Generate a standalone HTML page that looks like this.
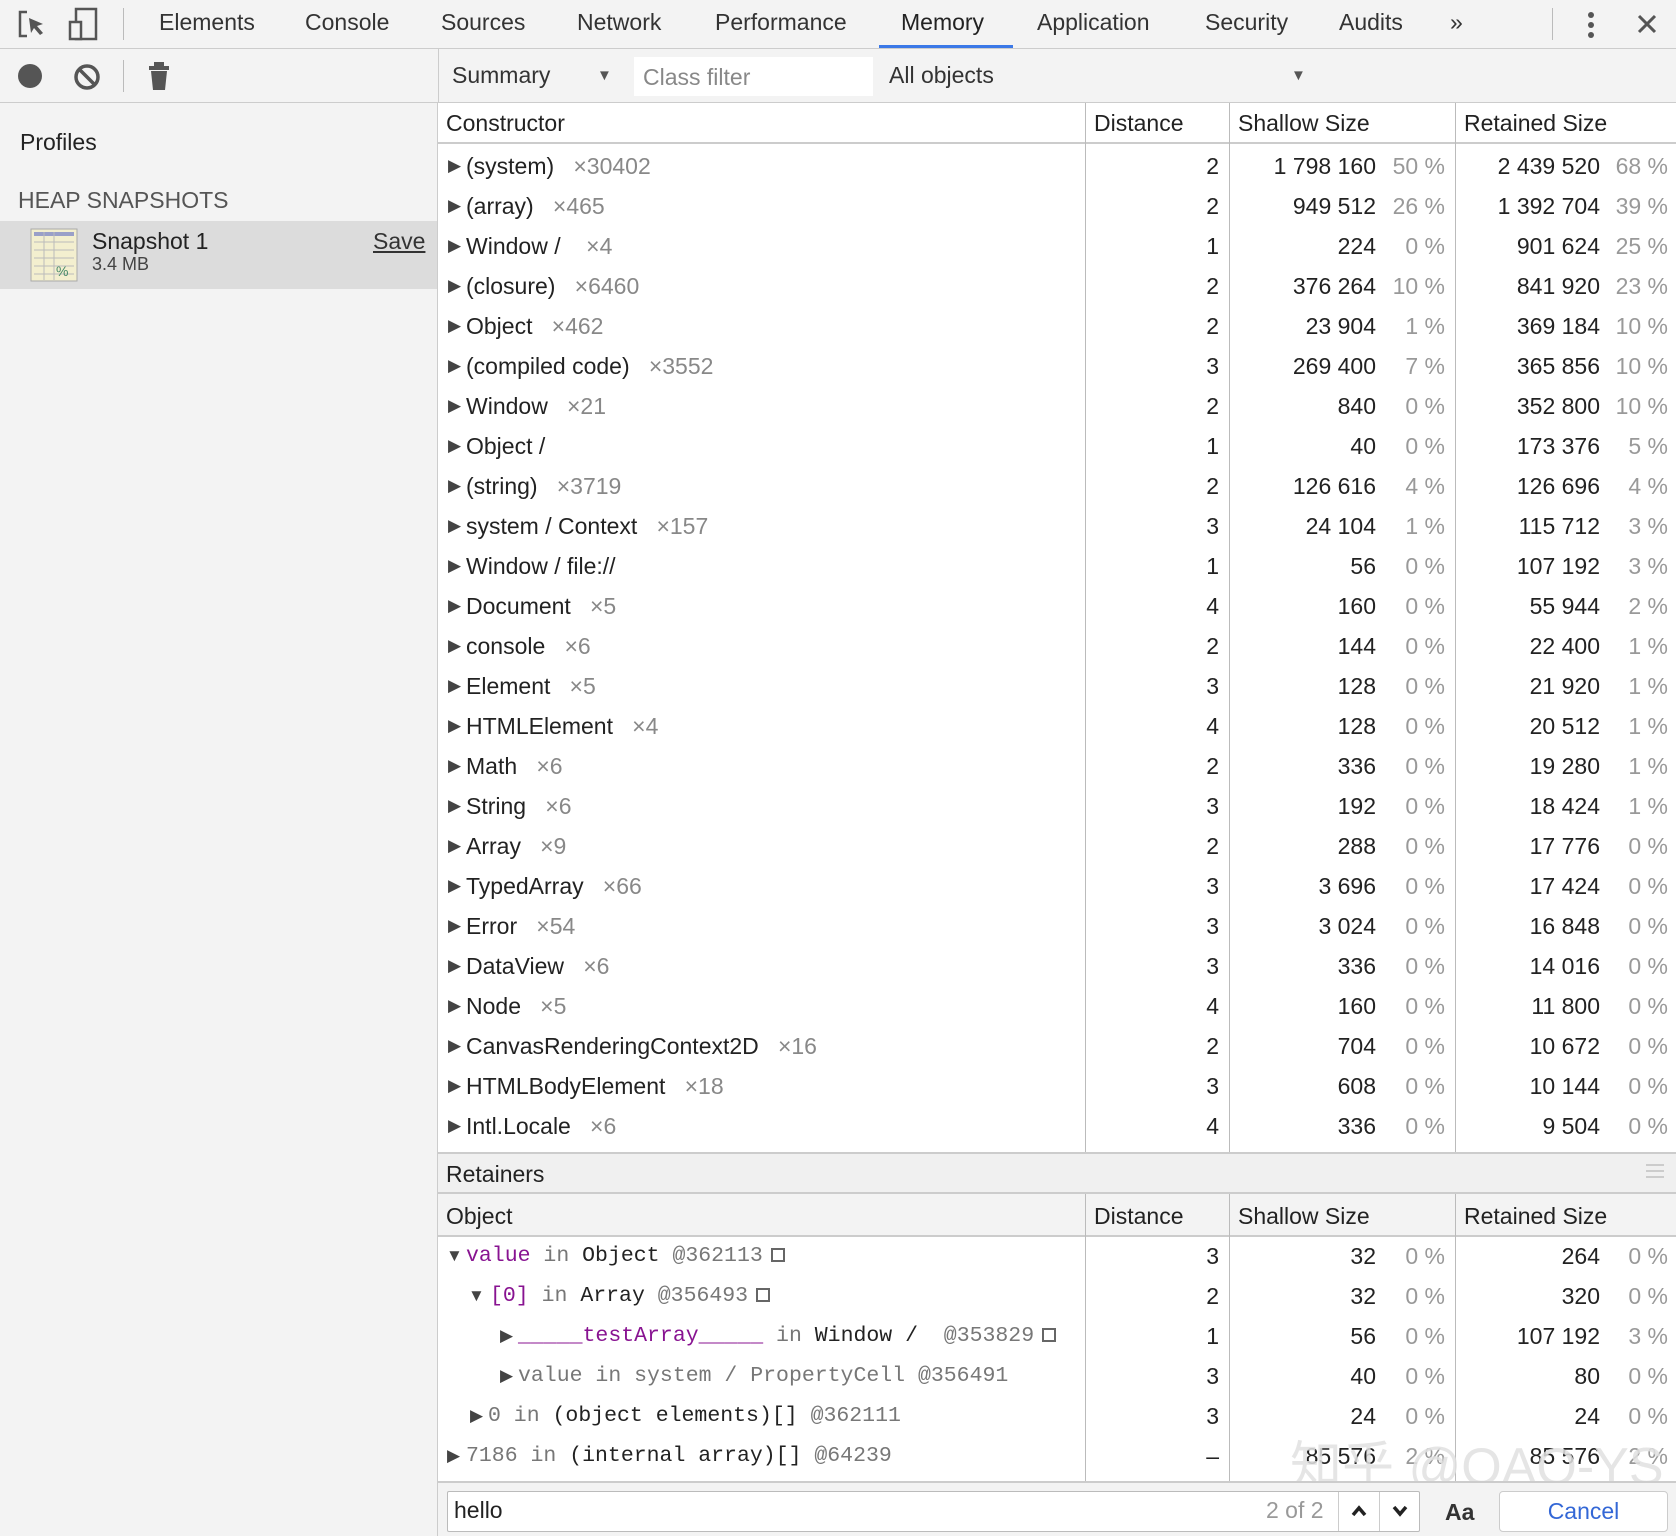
<!DOCTYPE html>
<html><head><meta charset="utf-8"><style>
*{margin:0;padding:0;box-sizing:border-box}
body{width:1676px;height:1536px;position:relative;overflow:hidden;background:#fff;font-family:"Liberation Sans",sans-serif;color:#222;font-size:23px}
.a{position:absolute;white-space:nowrap}
.top{left:0;top:0;width:1676px;height:49px;background:#f3f3f3;border-bottom:1px solid #ccc}
.tab{top:9px;font-size:23px;color:#333}
.tb2{left:0;top:49px;width:1676px;height:54px;background:#f3f3f3;border-bottom:1px solid #ccc}
.side{left:0;top:103px;width:438px;height:1433px;background:#f3f3f3;border-right:1px solid #ccc}
.hdr{left:438px;top:103px;width:1238px;height:41px;background:#fff;border-bottom:2px solid #ccc}
.vl{width:1px;background:#bbb}
.row{left:0;width:1676px;height:40px;line-height:40px}
.row .n{position:absolute;left:466px}
.row .t{position:absolute;left:448px;font-size:17px;color:#444}
.c{color:#888}
.d{position:absolute;right:457px}
.sn{position:absolute;right:300px}
.sp{position:absolute;right:231px;color:#999}
.rn{position:absolute;right:76px}
.rp{position:absolute;right:8px;color:#999}
.m{font-family:"Liberation Mono",monospace;font-size:21.5px}
.p{color:#881391}
.g{color:#777}
.box{display:inline-block;width:14px;height:14px;border:2px solid #666;vertical-align:middle;margin-left:8px}
</style></head><body>
<div class="a top"></div>
<svg class="a" style="left:17px;top:9px" width="30" height="32" viewBox="0 0 30 32"><path d="M10 3H3v24h7M3 3" fill="none" stroke="#555" stroke-width="2.5"/><path d="M12 9l14 6-6 2 6 7-3 2-6-7-3 5z" fill="#555"/></svg>
<svg class="a" style="left:68px;top:7px" width="32" height="36"><rect x="8" y="2" width="20" height="30" fill="none" stroke="#555" stroke-width="2.5"/><rect x="2" y="15" width="11" height="17" fill="#f3f3f3" stroke="#555" stroke-width="2.5"/></svg>
<div class="a vl" style="left:123px;top:8px;height:32px"></div>
<div class="a tab" style="left:159px">Elements</div>
<div class="a tab" style="left:305px">Console</div>
<div class="a tab" style="left:441px">Sources</div>
<div class="a tab" style="left:577px">Network</div>
<div class="a tab" style="left:715px">Performance</div>
<div class="a tab" style="left:901px;color:#222">Memory</div>
<div class="a" style="left:879px;top:45px;width:134px;height:3px;background:#3b78e7"></div>
<div class="a tab" style="left:1037px">Application</div>
<div class="a tab" style="left:1205px">Security</div>
<div class="a tab" style="left:1339px">Audits</div>
<div class="a tab" style="left:1450px">»</div>
<div class="a vl" style="left:1552px;top:8px;height:32px"></div>
<svg class="a" style="left:1584px;top:10px" width="14" height="30"><circle cx="7" cy="5" r="3" fill="#555"/><circle cx="7" cy="15" r="3" fill="#555"/><circle cx="7" cy="25" r="3" fill="#555"/></svg>
<svg class="a" style="left:1636px;top:13px" width="22" height="22"><path d="M3 3L19 19M19 3L3 19" stroke="#555" stroke-width="3"/></svg>

<div class="a tb2"></div>
<div class="a" style="left:18px;top:64px;width:24px;height:24px;border-radius:50%;background:#555"></div>
<svg class="a" style="left:73px;top:63px" width="28" height="28"><circle cx="14" cy="14" r="11" fill="none" stroke="#555" stroke-width="3.5"/><path d="M6 6L22 22" stroke="#555" stroke-width="3.5"/></svg>
<div class="a vl" style="left:123px;top:60px;height:32px"></div>
<svg class="a" style="left:148px;top:61px" width="22" height="30"><rect x="6" y="1" width="10" height="4" fill="#555"/><rect x="1" y="5" width="20" height="4" fill="#555"/><path d="M3 10h16l-2 19H5z" fill="#555"/></svg>
<div class="a" style="left:438px;top:49px;width:1px;height:54px;background:#ccc"></div>
<div class="a" style="left:452px;top:62px;color:#333">Summary</div>
<div class="a" style="left:597px;top:67px;font-size:15px;color:#555">▼</div>
<div class="a" style="left:634px;top:57px;width:239px;height:39px;background:#fff"></div>
<div class="a" style="left:643px;top:64px;color:#888">Class filter</div>
<div class="a" style="left:889px;top:62px;color:#333">All objects</div>
<div class="a" style="left:1291px;top:67px;font-size:15px;color:#555">▼</div>

<div class="a side"></div>
<div class="a" style="left:20px;top:129px">Profiles</div>
<div class="a" style="left:18px;top:187px;color:#555">HEAP SNAPSHOTS</div>
<div class="a" style="left:0;top:221px;width:437px;height:68px;background:#dcdcdc"></div>
<svg class="a" style="left:30px;top:228px" width="48" height="55"><rect x="1" y="1" width="46" height="52" fill="#f3efcf" stroke="#aaa"/><rect x="4" y="4" width="40" height="4" fill="#9aa0c8"/><g stroke="#bbb"><path d="M4 14h40M4 22h40M4 30h40M4 38h40M4 46h40M14 4v48M24 4v48"/></g><text x="26" y="48" font-size="14" fill="#486" font-family="Liberation Sans">%</text></svg>
<div class="a" style="left:92px;top:228px">Snapshot 1</div>
<div class="a" style="left:92px;top:254px;font-size:18px;color:#444">3.4 MB</div>
<div class="a" style="left:373px;top:228px;text-decoration:underline;color:#333">Save</div>

<div class="a hdr"></div>
<div class="a" style="left:446px;top:110px">Constructor</div>
<div class="a" style="left:1094px;top:110px">Distance</div>
<div class="a" style="left:1238px;top:110px">Shallow Size</div>
<div class="a" style="left:1464px;top:110px">Retained Size</div>
<div class="a vl" style="left:1085px;top:103px;height:1049px"></div>
<div class="a vl" style="left:1229px;top:103px;height:1049px"></div>
<div class="a vl" style="left:1455px;top:103px;height:1049px"></div>

<div class="a row" style="top:146px"><span class="t">▶</span><span class="n">(system) &nbsp;&nbsp;<span class="c">×30402</span></span><span class="d">2</span><span class="sn">1 798 160</span><span class="sp">50 %</span><span class="rn">2 439 520</span><span class="rp">68 %</span></div>
<div class="a row" style="top:186px"><span class="t">▶</span><span class="n">(array) &nbsp;&nbsp;<span class="c">×465</span></span><span class="d">2</span><span class="sn">949 512</span><span class="sp">26 %</span><span class="rn">1 392 704</span><span class="rp">39 %</span></div>
<div class="a row" style="top:226px"><span class="t">▶</span><span class="n">Window / &nbsp;&nbsp;&nbsp;<span class="c">×4</span></span><span class="d">1</span><span class="sn">224</span><span class="sp">0 %</span><span class="rn">901 624</span><span class="rp">25 %</span></div>
<div class="a row" style="top:266px"><span class="t">▶</span><span class="n">(closure) &nbsp;&nbsp;<span class="c">×6460</span></span><span class="d">2</span><span class="sn">376 264</span><span class="sp">10 %</span><span class="rn">841 920</span><span class="rp">23 %</span></div>
<div class="a row" style="top:306px"><span class="t">▶</span><span class="n">Object &nbsp;&nbsp;<span class="c">×462</span></span><span class="d">2</span><span class="sn">23 904</span><span class="sp">1 %</span><span class="rn">369 184</span><span class="rp">10 %</span></div>
<div class="a row" style="top:346px"><span class="t">▶</span><span class="n">(compiled code) &nbsp;&nbsp;<span class="c">×3552</span></span><span class="d">3</span><span class="sn">269 400</span><span class="sp">7 %</span><span class="rn">365 856</span><span class="rp">10 %</span></div>
<div class="a row" style="top:386px"><span class="t">▶</span><span class="n">Window &nbsp;&nbsp;<span class="c">×21</span></span><span class="d">2</span><span class="sn">840</span><span class="sp">0 %</span><span class="rn">352 800</span><span class="rp">10 %</span></div>
<div class="a row" style="top:426px"><span class="t">▶</span><span class="n">Object /</span><span class="d">1</span><span class="sn">40</span><span class="sp">0 %</span><span class="rn">173 376</span><span class="rp">5 %</span></div>
<div class="a row" style="top:466px"><span class="t">▶</span><span class="n">(string) &nbsp;&nbsp;<span class="c">×3719</span></span><span class="d">2</span><span class="sn">126 616</span><span class="sp">4 %</span><span class="rn">126 696</span><span class="rp">4 %</span></div>
<div class="a row" style="top:506px"><span class="t">▶</span><span class="n">system / Context &nbsp;&nbsp;<span class="c">×157</span></span><span class="d">3</span><span class="sn">24 104</span><span class="sp">1 %</span><span class="rn">115 712</span><span class="rp">3 %</span></div>
<div class="a row" style="top:546px"><span class="t">▶</span><span class="n">Window / file://</span><span class="d">1</span><span class="sn">56</span><span class="sp">0 %</span><span class="rn">107 192</span><span class="rp">3 %</span></div>
<div class="a row" style="top:586px"><span class="t">▶</span><span class="n">Document &nbsp;&nbsp;<span class="c">×5</span></span><span class="d">4</span><span class="sn">160</span><span class="sp">0 %</span><span class="rn">55 944</span><span class="rp">2 %</span></div>
<div class="a row" style="top:626px"><span class="t">▶</span><span class="n">console &nbsp;&nbsp;<span class="c">×6</span></span><span class="d">2</span><span class="sn">144</span><span class="sp">0 %</span><span class="rn">22 400</span><span class="rp">1 %</span></div>
<div class="a row" style="top:666px"><span class="t">▶</span><span class="n">Element &nbsp;&nbsp;<span class="c">×5</span></span><span class="d">3</span><span class="sn">128</span><span class="sp">0 %</span><span class="rn">21 920</span><span class="rp">1 %</span></div>
<div class="a row" style="top:706px"><span class="t">▶</span><span class="n">HTMLElement &nbsp;&nbsp;<span class="c">×4</span></span><span class="d">4</span><span class="sn">128</span><span class="sp">0 %</span><span class="rn">20 512</span><span class="rp">1 %</span></div>
<div class="a row" style="top:746px"><span class="t">▶</span><span class="n">Math &nbsp;&nbsp;<span class="c">×6</span></span><span class="d">2</span><span class="sn">336</span><span class="sp">0 %</span><span class="rn">19 280</span><span class="rp">1 %</span></div>
<div class="a row" style="top:786px"><span class="t">▶</span><span class="n">String &nbsp;&nbsp;<span class="c">×6</span></span><span class="d">3</span><span class="sn">192</span><span class="sp">0 %</span><span class="rn">18 424</span><span class="rp">1 %</span></div>
<div class="a row" style="top:826px"><span class="t">▶</span><span class="n">Array &nbsp;&nbsp;<span class="c">×9</span></span><span class="d">2</span><span class="sn">288</span><span class="sp">0 %</span><span class="rn">17 776</span><span class="rp">0 %</span></div>
<div class="a row" style="top:866px"><span class="t">▶</span><span class="n">TypedArray &nbsp;&nbsp;<span class="c">×66</span></span><span class="d">3</span><span class="sn">3 696</span><span class="sp">0 %</span><span class="rn">17 424</span><span class="rp">0 %</span></div>
<div class="a row" style="top:906px"><span class="t">▶</span><span class="n">Error &nbsp;&nbsp;<span class="c">×54</span></span><span class="d">3</span><span class="sn">3 024</span><span class="sp">0 %</span><span class="rn">16 848</span><span class="rp">0 %</span></div>
<div class="a row" style="top:946px"><span class="t">▶</span><span class="n">DataView &nbsp;&nbsp;<span class="c">×6</span></span><span class="d">3</span><span class="sn">336</span><span class="sp">0 %</span><span class="rn">14 016</span><span class="rp">0 %</span></div>
<div class="a row" style="top:986px"><span class="t">▶</span><span class="n">Node &nbsp;&nbsp;<span class="c">×5</span></span><span class="d">4</span><span class="sn">160</span><span class="sp">0 %</span><span class="rn">11 800</span><span class="rp">0 %</span></div>
<div class="a row" style="top:1026px"><span class="t">▶</span><span class="n">CanvasRenderingContext2D &nbsp;&nbsp;<span class="c">×16</span></span><span class="d">2</span><span class="sn">704</span><span class="sp">0 %</span><span class="rn">10 672</span><span class="rp">0 %</span></div>
<div class="a row" style="top:1066px"><span class="t">▶</span><span class="n">HTMLBodyElement &nbsp;&nbsp;<span class="c">×18</span></span><span class="d">3</span><span class="sn">608</span><span class="sp">0 %</span><span class="rn">10 144</span><span class="rp">0 %</span></div>
<div class="a row" style="top:1106px"><span class="t">▶</span><span class="n">Intl.Locale &nbsp;&nbsp;<span class="c">×6</span></span><span class="d">4</span><span class="sn">336</span><span class="sp">0 %</span><span class="rn">9 504</span><span class="rp">0 %</span></div>

<div class="a" style="left:438px;top:1152px;width:1238px;height:42px;background:#f0f0f0;border-top:2px solid #ccc;border-bottom:2px solid #ccc"></div>
<div class="a" style="left:446px;top:1161px">Retainers</div>
<div class="a" style="left:1646px;top:1164px;width:18px;height:14px;border-top:2px solid #ccc;border-bottom:2px solid #ccc"><div style="margin-top:4px;border-top:2px solid #ccc"></div></div>
<div class="a" style="left:438px;top:1194px;width:1238px;height:43px;background:#f3f3f3;border-bottom:2px solid #ccc"></div>
<div class="a" style="left:446px;top:1203px">Object</div>
<div class="a" style="left:1094px;top:1203px">Distance</div>
<div class="a" style="left:1238px;top:1203px">Shallow Size</div>
<div class="a" style="left:1464px;top:1203px">Retained Size</div>
<div class="a vl" style="left:1085px;top:1194px;height:287px"></div>
<div class="a vl" style="left:1229px;top:1194px;height:287px"></div>
<div class="a vl" style="left:1455px;top:1194px;height:287px"></div>

<div class="a row" style="top:1236px"><span class="t" style="left:446px">▼</span><span class="n m" style="left:466px"><span class="p">value</span> <span class="g">in</span> Object <span class="g">@362113</span><span class="box"></span></span><span class="d">3</span><span class="sn">32</span><span class="sp">0 %</span><span class="rn">264</span><span class="rp">0 %</span></div>
<div class="a row" style="top:1276px"><span class="t" style="left:468px">▼</span><span class="n m" style="left:490px"><span class="p">[0]</span> <span class="g">in</span> Array <span class="g">@356493</span><span class="box"></span></span><span class="d">2</span><span class="sn">32</span><span class="sp">0 %</span><span class="rn">320</span><span class="rp">0 %</span></div>
<div class="a row" style="top:1316px"><span class="t" style="left:500px">▶</span><span class="n m" style="left:518px"><span class="p">_____testArray_____</span> <span class="g">in</span> Window / &nbsp;<span class="g">@353829</span><span class="box"></span></span><span class="d">1</span><span class="sn">56</span><span class="sp">0 %</span><span class="rn">107 192</span><span class="rp">3 %</span></div>
<div class="a row" style="top:1356px"><span class="t" style="left:500px">▶</span><span class="n m g" style="left:518px">value in system / PropertyCell @356491</span><span class="d">3</span><span class="sn">40</span><span class="sp">0 %</span><span class="rn">80</span><span class="rp">0 %</span></div>
<div class="a row" style="top:1396px"><span class="t" style="left:470px">▶</span><span class="n m" style="left:488px"><span class="g">0 in</span> (object elements)[] <span class="g">@362111</span></span><span class="d">3</span><span class="sn">24</span><span class="sp">0 %</span><span class="rn">24</span><span class="rp">0 %</span></div>
<div class="a row" style="top:1436px"><span class="t" style="left:447px">▶</span><span class="n m" style="left:466px"><span class="g">7186 in</span> (internal array)[] <span class="g">@64239</span></span><span class="d">–</span><span class="sn">85 576</span><span class="sp">2 %</span><span class="rn">85 576</span><span class="rp">2 %</span></div>
<div class="a" style="left:1290px;top:1424px;font-size:52px;color:rgba(225,225,225,0.85);font-family:'Liberation Sans','Noto Sans CJK SC',sans-serif">知乎 @QAQ-YS</div>

<div class="a" style="left:438px;top:1481px;width:1238px;height:55px;background:#f3f3f3;border-top:2px solid #ccc"></div>
<div class="a" style="left:447px;top:1491px;width:973px;height:41px;background:#fff;border:1px solid #bbb;border-radius:2px"></div>
<div class="a" style="left:454px;top:1497px">hello</div>
<div class="a" style="left:1266px;top:1497px;color:#999">2 of 2</div>
<div class="a vl" style="left:1338px;top:1492px;height:39px;background:#ccc"></div>
<div class="a vl" style="left:1379px;top:1492px;height:39px;background:#ccc"></div>
<svg class="a" style="left:1350px;top:1503px" width="18" height="16"><path d="M3 12L9 5l6 7" fill="none" stroke="#222" stroke-width="3.5"/></svg>
<svg class="a" style="left:1391px;top:1503px" width="18" height="16"><path d="M3 4l6 7 6-7" fill="none" stroke="#222" stroke-width="3.5"/></svg>
<div class="a" style="left:1445px;top:1499px;font-weight:bold;color:#333">Aa</div>
<div class="a" style="left:1499px;top:1491px;width:169px;height:41px;background:#fff;border:1px solid #ccc;border-radius:4px;text-align:center;line-height:39px;color:#3367d6">Cancel</div>
</body></html>
